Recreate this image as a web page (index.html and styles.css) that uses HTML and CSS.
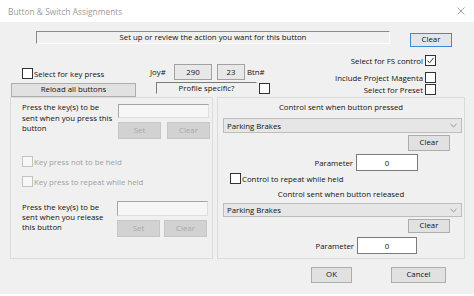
FILE: index.html
```html
<!DOCTYPE html>
<html>
<head>
<meta charset="utf-8">
<link rel="stylesheet" href="styles.css">
</head>
<body>
<div class="win">
  <div class="titlebar">
    <span class="title">Button &amp; Switch Assignments</span>
    <svg class="close" viewBox="0 0 8 8"><path d="M0.5 0.5L7.5 7.5M7.5 0.5L0.5 7.5" stroke="#9a9a9a" stroke-width="0.9" fill="none"/></svg>
  </div>
  <div class="client">
    <div class="row1">
      <div class="status">Set up or review the action you want for this button</div>
      <div class="btn default clear-top">Clear</div>
    </div>
    <div class="row2">
      <div class="colL">
        <div class="chk keysel"><span class="box"></span><span>Select for key press</span></div>
        <div class="btn reload">Reload all buttons</div>
      </div>
      <div class="colM">
        <div class="joy">
          <span class="joylbl">Joy#</span>
          <span class="field f290">290</span>
          <span class="field f23">23</span>
          <span class="btnlbl">Btn#</span>
        </div>
        <div class="profile">
          <span class="sunken">Profile specific?</span>
          <span class="box"></span>
        </div>
      </div>
      <div class="colR">
        <div class="chkR r1"><span>Select for FS control</span><span class="box"><svg viewBox="0 0 9 9"><path d="M1.5 4.6L3.6 6.8L7.6 1.8" stroke="#222" stroke-width="0.9" fill="none"/></svg></span></div>
        <div class="chkR r2"><span>Include Project Magenta</span><span class="box"></span></div>
        <div class="chkR r3"><span>Select for Preset</span><span class="box"></span></div>
      </div>
    </div>
    <div class="groups">
      <div class="group gl">
        <div class="krow ka">
          <div class="ktext">Press the key(s) to be<br>sent when you press this<br>button</div>
          <div class="kctl">
            <div class="kin"></div>
            <div class="kbtns"><div class="btn dis">Set</div><div class="btn dis">Clear</div></div>
          </div>
        </div>
        <div class="chk dischk c1"><span class="box"></span><span>Key press not to be held</span></div>
        <div class="chk dischk c2"><span class="box"></span><span>Key press to repeat while held</span></div>
        <div class="krow kb">
          <div class="ktext">Press the key(s) to be<br>sent when you release<br>this button</div>
          <div class="kctl">
            <div class="kin"></div>
            <div class="kbtns"><div class="btn dis">Set</div><div class="btn dis">Clear</div></div>
          </div>
        </div>
      </div>
      <div class="group gr">
        <div class="ctitle t1">Control sent when button pressed</div>
        <div class="dd d1"><span>Parking Brakes</span><svg viewBox="0 0 8 5"><path d="M0.5 0.8L4 4L7.5 0.8" stroke="#777" stroke-width="0.8" fill="none"/></svg></div>
        <div class="btn cclear cl1">Clear</div>
        <div class="param p1"><span>Parameter</span><div class="pin">0</div></div>
        <div class="chk cchk"><span class="box"></span><span>Control to repeat while held</span></div>
        <div class="ctitle t2">Control sent when button released</div>
        <div class="dd d2"><span>Parking Brakes</span><svg viewBox="0 0 8 5"><path d="M0.5 0.8L4 4L7.5 0.8" stroke="#777" stroke-width="0.8" fill="none"/></svg></div>
        <div class="btn cclear cl2">Clear</div>
        <div class="param p2"><span>Parameter</span><div class="pin">0</div></div>
      </div>
    </div>
    <div class="footer">
      <div class="btn ok">OK</div>
      <div class="btn cancel">Cancel</div>
    </div>
  </div>
</div>
</body>
</html>
```
FILE: styles.css
```css
* { box-sizing: border-box; margin: 0; padding: 0; }
html, body { width: 474px; height: 296px; overflow: hidden; }
body {
  background: #ffffff;
  font-family: "Open Sans", "Noto Sans", sans-serif;
  font-size: 7.8px;
  color: #111;
}
.win { display: flex; flex-direction: column; height: 296px; }

.titlebar {
  height: 22px;
  display: flex;
  align-items: center;
  justify-content: space-between;
  padding: 0 9px 0 8px;
  background: #fff;
}
.title { font-size: 8.4px; color: #9a9a9a; }
.close { width: 8px; height: 8px; }

.client {
  height: 272px;
  background: #f0f0f0;
  display: flex;
  flex-direction: column;
}

.btn {
  display: flex;
  align-items: center;
  justify-content: center;
  background: #e1e1e1;
  border: 1px solid #adadad;
  color: #111;
  line-height: 1;
}
.btn.default { border-color: #3c8bd6; background: #e3e6ea; }
.btn.dis { background: #d2d2d2; border-color: #c6c6c6; color: #a8a8a8; }

.box {
  display: inline-block;
  flex: none;
  width: 11px;
  height: 11px;
  border: 1px solid #333;
  background: #fff;
}
.box svg { display: block; width: 9px; height: 9px; }

.chk { display: flex; align-items: center; height: 11px; }
.chk .box { margin-right: 1px; }
.chkR { display: flex; align-items: center; height: 11px; }
.chkR .box { margin-left: 2px; }

/* row 1 */
.row1 { display: flex; align-items: flex-start; margin-top: 9px; padding-left: 36px; height: 16px; }
.status {
  width: 354px;
  height: 13px;
  border-style: solid;
  border-width: 1px;
  border-color: #8a8a8a #fdfdfd #fdfdfd #8a8a8a;
  text-align: center;
  line-height: 11px;
}
.clear-top { margin-left: 20px; margin-top: 2px; width: 42px; height: 14px; }

/* row 2 */
.row2 { display: flex; margin-top: 8px; height: 42px; padding-left: 11px; }
.colL { width: 125px; }
.keysel { margin-top: 13px; margin-left: 11px; }
.reload { margin-top: 4px; width: 125px; height: 14px; }
.colM { margin-left: 14px; padding-top: 9px; }
.joy { display: flex; align-items: center; height: 16px; }
.joylbl { width: 24px; }
.field {
  display: flex; align-items: center; justify-content: center;
  height: 16px;
  background: #e8e8e8;
  border: 1px solid #a2a2a2;
}
.f290 { width: 38px; }
.f23 { width: 28px; margin-left: 5px; }
.btnlbl { margin-left: 2px; }
.profile { display: flex; align-items: center; margin-top: 2px; margin-left: 6px; }
.sunken {
  width: 101px; height: 12px;
  border-style: solid; border-width: 1px;
  border-color: #7a7a7a #f0f0f0 #f0f0f0 #7a7a7a;
  text-align: center; line-height: 10px;
}
.profile .box { margin-left: 2px; }
.colR { flex: 1; display: flex; flex-direction: column; align-items: flex-end; padding-right: 38px; }
.r2 { margin-top: 6px; }
.r3 { margin-top: 1px; }

/* groups */
.groups { display: flex; gap: 4px; padding-left: 10px; height: 162px; }
.group { border: 1px solid #dcdcdc; display: flex; flex-direction: column; }
.gl { width: 203px; }
.gr { width: 248px; }

.krow { display: flex; padding-left: 11px; }
.ktext { line-height: 10.5px; white-space: nowrap; }
.ka .ktext { width: 96px; padding-top: 4px; }
.ka .kctl { margin-top: 6px; width: 92px; }
.ka .kin { width: 91px; height: 14px; }
.ka .kbtns { gap: 6px; }
.kb { margin-top: 14px; }
.kb .ktext { width: 95px; padding-top: 1px; line-height: 10px; }
.kb .kin { width: 91px; height: 15px; }
.kb .kbtns { gap: 4px; }
.kin {
  background: #f6f6f6;
  border-style: solid; border-width: 1px;
  border-color: #a5a5a5 #dedede #dedede #a5a5a5;
}
.kbtns { display: flex; margin-top: 4px; }
.kbtns .btn { width: 43px; height: 17px; }

.dischk { margin-left: 11px; color: #a0a0a0; }
.dischk .box { border-color: #c3c3c3; background: #f7f7f7; }
.c1 { margin-top: 17px; }
.c2 { margin-top: 9px; }

.ctitle { text-align: center; line-height: 10px; }
.t1 { margin-top: 4px; }
.dd {
  display: flex; align-items: center; justify-content: space-between;
  margin: 6px 2px 0 5px;
  height: 15px;
  padding: 0 4px 0 3px;
  background: #e6e6e6;
  border: 1px solid #bdbdbd;
}
.dd svg { width: 7px; height: 5px; }
.cclear { align-self: flex-end; margin-right: 14px; width: 42px; height: 16px; }
.cl1 { margin-top: 2px; }
.param { display: flex; align-items: center; justify-content: flex-end; }
.param span { margin-right: 3px; }
.pin {
  display: flex; align-items: center; justify-content: center;
  height: 17px;
  background: #fff;
  border: 1px solid #7a7a7a;
}
.p1 { margin-top: 3px; margin-right: 46px; }
.p1 .pin { width: 62px; }
.cchk { margin-top: 2px; margin-left: 12px; }
.t2 { margin-top: 5px; }
.d2 { margin-top: 4px; height: 14px; }
.cl2 { margin-top: 2px; height: 14px; }
.p2 { margin-top: 4px; margin-right: 47px; }
.p2 .pin { width: 60px; }

.footer { display: flex; margin-top: 8px; padding-left: 311px; }
.ok { width: 41px; height: 16px; }
.cancel { width: 55px; height: 16px; margin-left: 39px; }
```
